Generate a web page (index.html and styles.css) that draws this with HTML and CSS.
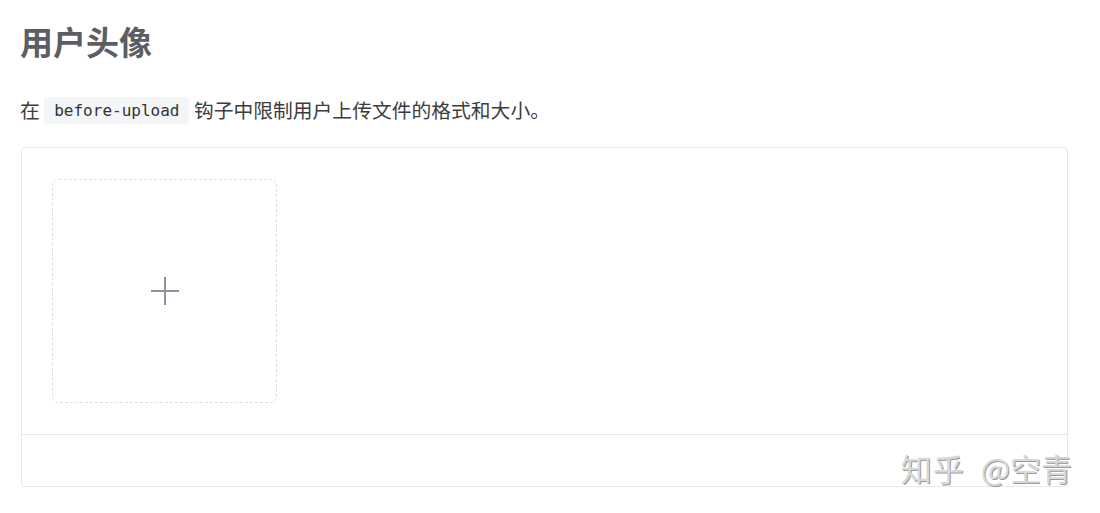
FILE: index.html
```html
<!DOCTYPE html>
<html lang="zh-CN">
<head>
<meta charset="utf-8">
<title>用户头像</title>
<link rel="stylesheet" href="styles.css">
</head>
<body>
<main class="page">
  <h2 class="title">用户头像</h2>
  <p class="desc">在 <code class="code">before-upload</code> 钩子中限制用户上传文件的格式和大小。</p>
  <section class="demo">
    <div class="demo-source">
      <div class="uploader">
        <svg class="plus" width="30" height="30" viewBox="0 0 30 30" aria-hidden="true">
          <path d="M15 1 V29 M1 15 H29" stroke="#8c939d" stroke-width="2" fill="none"/>
        </svg>
      </div>
    </div>
    <div class="demo-footer"></div>
    <div class="watermark"><span>知乎</span><span class="wm-handle">@空青</span></div>
  </section>
</main>
</body>
</html>
```

FILE: styles.css
```css
html, body {
  margin: 0;
  padding: 0;
  background: #ffffff;
}

body {
  font-family: "Noto Sans CJK SC", "Noto Sans", sans-serif;
}

.page {
  padding: 20px 32px 0 21px;
}

.title {
  margin: 0 0 0 -1px;
  font-size: 33px;
  line-height: 42px;
  font-weight: 700;
  color: #5c5e63;
}

.desc {
  margin: 34px 0 0 -1px;
  font-size: 19.8px;
  line-height: 28px;
  color: #3d3d3d;
  display: flex;
  align-items: center;
  white-space: pre;
}

.code {
  font-family: "DejaVu Sans Mono", "Liberation Mono", monospace;
  font-size: 16px;
  line-height: 27px;
  padding: 0 10px;
  background: #f4f5f7;
  border-radius: 4px;
  color: #333;
}

.demo {
  position: relative;
  margin-top: 23px;
  width: 1045px;
  border: 1px solid #e6e8eb;
  border-radius: 4px;
}

.demo-source {
  padding: 31px 30px 31px 30px;
}

.uploader {
  width: 223px;
  height: 222px;
  border: 1px dashed #dcdfe6;
  border-radius: 7px;
  display: flex;
  align-items: center;
  justify-content: center;
}

.plus {
  display: block;
}

.demo-footer {
  height: 51px;
  border-top: 1px solid #e4e6ea;
}

.watermark {
  position: absolute;
  right: -5px;
  bottom: -2px;
  display: flex;
  gap: 16px;
  font-size: 31px;
  line-height: 40px;
  color: #d8d8d8;
  text-shadow: 1px 1px 0 #9a9a9a, -1px 0 0 #ffffff;
  letter-spacing: 1px;
}

.wm-handle {
  letter-spacing: 0;
}
```
